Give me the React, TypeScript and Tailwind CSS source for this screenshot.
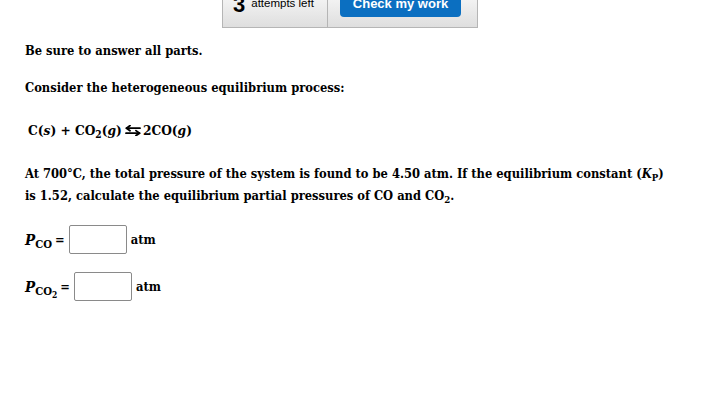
import React from "react";

const serif = {
  fontFamily: '"DejaVu Serif Condensed", "DejaVu Serif", serif',
  fontStretch: "condensed" as const,
};

function Sub({ children }: { children: React.ReactNode }) {
  return <sub className="text-[0.75em] align-baseline relative top-[0.32em]">{children}</sub>;
}

// leftwards arrow over rightwards arrow
function EqArrow() {
  return (
    <svg width="16" height="11" viewBox="0 0 16 11" className="inline-block ml-[3px] mr-[2px] align-[-1px]" fill="none" stroke="#000" strokeWidth="1.8" strokeLinecap="round" strokeLinejoin="round">
      <path d="M1.5 3.2H15" />
      <path d="M5 0.6L1.5 3.2L5 5.8" />
      <path d="M1 8.2H14.5" />
      <path d="M11 5.6L14.5 8.2L11 10.6" />
    </svg>
  );
}

export default function App() {
  return (
    <div className="w-[716px] h-[402px] bg-white text-black overflow-hidden relative" style={serif}>
      {/* attempts + submit bar */}
      <div className="ml-[222px] flex w-[256px] h-[28px] border border-t-0 border-[#b5b5b5] bg-gradient-to-b from-[#f2f2f2] to-[#dedede]" style={{ fontFamily: '"Liberation Sans", Arial, sans-serif' }}>
        <div className="w-[105px] border-r border-[#b5b5b5] flex items-start pl-[10px] -mt-[4px]">
          <span className="text-[22px] font-bold leading-[18px]">3</span>
          <span className="text-[11.5px] leading-[11px] ml-[6px] mt-[2px]">attempts left</span>
        </div>
        <div className="flex-1 flex items-start pl-[12px]">
          <button className="w-[121px] h-[17px] rounded-b-[4px] bg-[#0b6fc1] text-white text-[13px] font-bold leading-[8px] flex items-start justify-center">
            Check my work
          </button>
        </div>
      </div>

      <div className="pl-[25px] text-[12.8px] font-bold leading-[20px]">
        <p className="mt-[13px]">Be sure to answer all parts.</p>
        <p className="mt-[17px]">Consider the heterogeneous equilibrium process:</p>
        <p className="mt-[22px] pl-[3px] text-[13.6px]">
          C(<i>s</i>) + CO<Sub>2</Sub>(<i>g</i>)<EqArrow />2CO(<i>g</i>)
        </p>
        <p className="mt-[23px] leading-[22px] pr-[40px]">
          At 700°C, the total pressure of the system is found to be 4.50 atm. If the equilibrium constant (<i>K</i><Sub>P</Sub>) is 1.52, calculate the equilibrium partial pressures of CO and CO<Sub>2</Sub>.
        </p>
        <div className="mt-[18px] flex items-center h-[29px]">
          <span className="text-[15px]"><i>P</i><Sub>CO</Sub></span>
          <span className="ml-[3px]">=</span>
          <div className="ml-[4px] w-[58px] h-[29px] border border-[#8a8a8a] rounded-[2px] bg-white" />
          <span className="ml-[4px]">atm</span>
        </div>
        <div className="mt-[18px] flex items-center h-[29px]">
          <span className="text-[15px]"><i>P</i><Sub>CO<Sub>2</Sub></Sub></span>
          <span className="ml-[3px]">=</span>
          <div className="ml-[4px] w-[58px] h-[29px] border border-[#8a8a8a] rounded-[2px] bg-white" />
          <span className="ml-[4px]">atm</span>
        </div>
      </div>
    </div>
  );
}
